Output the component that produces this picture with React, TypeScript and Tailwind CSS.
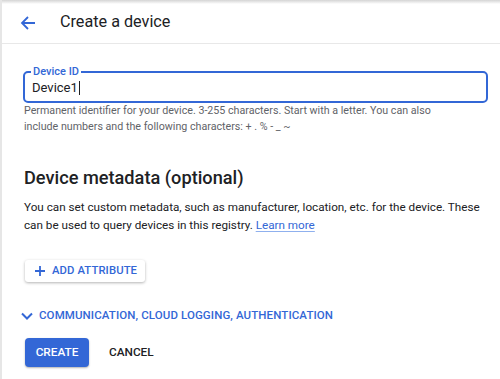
import React from "react";

const ArrowLeft = () => (
  <svg width="16" height="16" viewBox="0 0 16 16" fill="none">
    <path d="M15 8H2M8 2L2 8l6 6" stroke="#3367d6" strokeWidth="1.8" />
  </svg>
);

const Plus = () => (
  <svg width="10" height="10" viewBox="0 0 10 10" fill="none">
    <path d="M5 0v10M0 5h10" stroke="#3367d6" strokeWidth="1.8" />
  </svg>
);

const Chevron = () => (
  <svg width="12" height="8" viewBox="0 0 12 8" fill="none">
    <path d="M1 1.5l5 5 5-5" stroke="#3367d6" strokeWidth="2" />
  </svg>
);

const App = () => {
  return (
    <div
      className="w-[500px] h-[379px] overflow-hidden bg-white border-l-2 border-[#e6e6e6] text-[#202124]"
      style={{ fontFamily: "Roboto, 'Liberation Sans', sans-serif" }}
    >
      {/* header */}
      <div className="relative h-[44px] flex items-center border-b border-[#e8e8e8]">
        <div className="absolute top-0 left-0 right-0 h-[4px] bg-gradient-to-b from-[#d4d4d4] to-white" />
        <div className="w-[58px] pl-[18px] pt-[3px]">
          <ArrowLeft />
        </div>
        <h1 className="text-[16.2px] leading-none pt-[1px]">Create a device</h1>
      </div>

      <div className="pl-[21px] pr-[12px]">
        {/* device id field */}
        <fieldset className="mt-[23px] h-[36px] border-2 border-[#3367d6] rounded-[5px] pl-[6px] pr-2">
          <legend className="px-[2px] text-[11px] leading-[10px] text-[#3367d6] font-medium">
            Device ID
          </legend>
          <div className="text-[13px] leading-[18px] mt-[2px] ml-[1px] flex items-center">
            Device1
            <span className="inline-block w-px h-[14px] bg-[#202124] ml-[1px]" />
          </div>
        </fieldset>
        <p className="mt-0 ml-[1px] text-[10.7px] leading-[16px] text-[#5f6368]">
          Permanent identifier for your device. 3-255 characters. Start with a letter. You can also
          <br />
          include numbers and the following characters: + . % - _ ~
        </p>

        {/* metadata */}
        <h2 className="mt-[32px] ml-[1px] text-[18.2px] leading-[22px] font-medium">Device metadata (optional)</h2>
        <p className="mt-[9px] ml-[1px] text-[11.7px] leading-[18px]">
          You can set custom metadata, such as manufacturer, location, etc. for the device. These
          <br />
          can be used to query devices in this registry.{" "}
          <span className="text-[#3367d6] underline decoration-[#8fb0ee] underline-offset-2">Learn more</span>
        </p>

        <button className="mt-[26px] ml-[2px] h-[22px] w-[120px] pl-[10px] flex items-center gap-[7px] rounded-[3px] bg-white shadow-[0_1px_3px_rgba(0,0,0,0.3)] text-[11.3px] font-medium text-[#3367d6] tracking-[0.1px]">
          <Plus />
          ADD ATTRIBUTE
        </button>

        <div className="mt-[25px] -ml-[2px] flex items-center gap-[6px] text-[11.5px] font-medium text-[#3367d6] tracking-[0.1px]">
          <Chevron />
          COMMUNICATION, CLOUD LOGGING, AUTHENTICATION
        </div>

        <div className="mt-[14px] ml-[2px] flex items-center gap-[20px]">
          <button className="h-[29px] w-[64px] rounded-[4px] bg-[#3367d6] text-white text-[11.8px] font-medium shadow-[0_1px_2px_rgba(0,0,0,0.3)]">
            CREATE
          </button>
          <button className="text-[11.8px] font-medium text-[#202124]">CANCEL</button>
        </div>
      </div>
    </div>
  );
};

export default App;
